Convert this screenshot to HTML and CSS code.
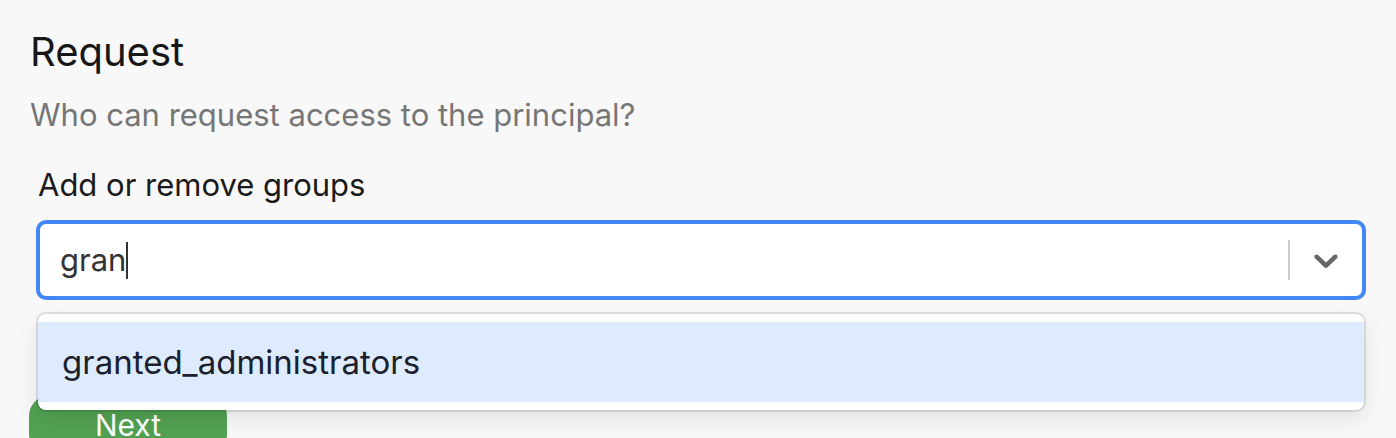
FILE: index.html
```html
<!DOCTYPE html>
<html lang="en">
<head>
<meta charset="utf-8">
<title>Request</title>
<link rel="stylesheet" href="styles.css">
</head>
<body>
<main class="page">
  <h2 class="title">Request</h2>
  <p class="subtitle">Who can request access to the principal?</p>
  <div class="field">
    <label class="field-label">Add or remove groups</label>
    <div class="select">
      <div class="control">
        <div class="value"><span class="input-text">gran</span><span class="caret"></span></div>
        <div class="indicators">
          <span class="sep"></span>
          <span class="dropdown">
            <svg width="40" height="40" viewBox="0 0 20 20" aria-hidden="true"><path fill="currentColor" d="M4.516 7.548c0.436-0.446 1.043-0.481 1.576 0l3.908 3.747 3.908-3.747c0.533-0.481 1.141-0.446 1.574 0 0.436 0.445 0.408 1.197 0 1.615-0.406 0.418-4.695 4.502-4.695 4.502-0.217 0.223-0.502 0.335-0.787 0.335s-0.57-0.112-0.789-0.335c0 0-4.287-4.084-4.695-4.502s-0.436-1.170 0-1.615z"/></svg>
          </span>
        </div>
      </div>
      <div class="menu">
        <div class="option">granted_administrators</div>
      </div>
    </div>
  </div>
  <button class="btn" type="button">Next</button>
</main>
</body>
</html>
```

FILE: styles.css
```css
html, body {
  margin: 0;
  background: #f8f8f8;
  font-family: Inter, "Noto Sans", sans-serif;
}

.page {
  padding: 28px 30px 0;
}

.title {
  margin: 0;
  font-size: 40px;
  line-height: 48px;
  font-weight: 400;
  color: #171717;
}

.subtitle {
  margin: 19px 0 0;
  font-size: 31px;
  line-height: 40px;
  color: #767676;
}

.field {
  margin: 26px 2px 0 8px;
}

.field-label {
  display: block;
  font-size: 31px;
  line-height: 48px;
  color: #1a1a1a;
  margin-bottom: 13px;
}

.select {
  position: relative;
}

.control {
  display: flex;
  align-items: center;
  min-height: 72px;
  background: #fff;
  border: 2px solid #4287f5;
  box-shadow: 0 0 0 2px #4287f5;
  border-radius: 8px;
}

.value {
  flex: 1;
  display: flex;
  align-items: center;
  padding: 4px 16px 4px 20px;
}

.input-text {
  font-size: 31px;
  line-height: 48px;
  color: #333;
}

.caret {
  width: 2px;
  height: 37px;
  background: #333;
  margin-left: 0;
}

.indicators {
  display: flex;
  align-items: stretch;
  align-self: stretch;
}

.sep {
  width: 2px;
  margin: 16px 0;
  background: #ccc;
}

.dropdown {
  display: flex;
  align-items: center;
  padding: 16px;
  color: #666;
}

.menu {
  position: absolute;
  top: 100%;
  left: 0;
  right: 0;
  margin-top: 16px;
  padding: 8px 0;
  background: #fff;
  border-radius: 8px;
  box-shadow: 0 0 0 2px rgba(0, 0, 0, 0.1), 0 8px 22px rgba(0, 0, 0, 0.1);
  z-index: 2;
}

.option {
  padding: 16px 24px;
  font-size: 33px;
  line-height: 48px;
  background: #deebff;
  color: #1a202c;
}

.btn {
  display: block;
  margin-top: 98px;
  width: 198px;
  height: 58px;
  margin-left: -1px;
  padding: 0;
  border: none;
  border-radius: 20px;
  background: #52a152;
  color: #fff;
  font-family: inherit;
  font-size: 30px;
}
```
